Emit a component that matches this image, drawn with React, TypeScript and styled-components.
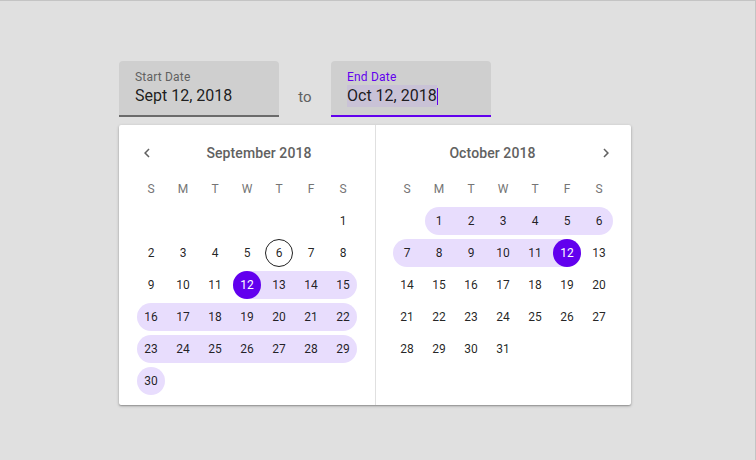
import React from "react";
import styled, { createGlobalStyle } from "styled-components";

const GlobalStyle = createGlobalStyle`
  html, body {
    margin: 0;
    padding: 0;
    background: #e0e0e0;
  }
  * {
    box-sizing: border-box;
  }
`;

const Page = styled.div`
  width: 756px;
  height: 460px;
  background: #e0e0e0;
  border-top: 1px solid #c4c4c4;
  border-right: 1px solid #c4c4c4;
  padding: 60px 0 0 119px;
  font-family: Roboto, "Noto Sans", sans-serif;
`;

const Picker = styled.div`
  width: 512px;
  display: flex;
  flex-direction: column;
  gap: 8px;
`;

const FieldRow = styled.div`
  display: flex;
  align-items: flex-start;
`;

const Field = styled.div<{ $active?: boolean }>`
  width: 160px;
  height: 56px;
  padding: 8px 16px 0;
  background: #cfcfcf;
  border-radius: 4px 4px 0 0;
  border-bottom: 2px solid ${({ $active }) => ($active ? "#6200ee" : "#6b6b6b")};
  display: flex;
  flex-direction: column;
`;

const FieldLabel = styled.div<{ $active?: boolean }>`
  font-size: 12px;
  line-height: 16px;
  letter-spacing: 0.2px;
  color: ${({ $active }) => ($active ? "#6200ee" : "#616161")};
`;

const FieldValue = styled.div`
  font-size: 16px;
  line-height: 22px;
  color: rgba(0, 0, 0, 0.87);
  display: flex;
  align-items: center;
`;

const Selected = styled.span`
  background: #c9c2d6;
`;

const Caret = styled.span`
  width: 1px;
  height: 17px;
  background: #6200ee;
`;

const Separator = styled.div`
  width: 52px;
  padding-top: 25px;
  text-align: center;
  font-size: 15px;
  line-height: 22px;
  color: #616161;
`;

const Card = styled.div`
  width: 512px;
  height: 280px;
  background: #fff;
  border-radius: 2px;
  box-shadow: 0 1px 3px rgba(0, 0, 0, 0.3), 0 1px 1px rgba(0, 0, 0, 0.14);
  display: flex;
`;

const Month = styled.div<{ $divided?: boolean }>`
  width: 256px;
  padding: 7px 16px 0;
  box-shadow: ${({ $divided }) => ($divided ? "inset 1px 0 0 #e0e0e0" : "none")};
`;

const MonthHeader = styled.div`
  height: 41px;
  display: flex;
  align-items: center;
`;

const NavButton = styled.div<{ $side: "left" | "right" }>`
  width: 24px;
  height: 24px;
  margin-right: ${({ $side }) => ($side === "right" ? "-3px" : "0")};
  display: flex;
  align-items: center;
  justify-content: center;
  color: #616161;
`;

const MonthTitle = styled.div`
  flex: 1;
  text-align: center;
  font-size: 14px;
  font-weight: 500;
  letter-spacing: 0.1px;
  color: #616161;
`;

const Grid = styled.div`
  display: grid;
  grid-template-columns: repeat(7, 32px);
  grid-auto-rows: 32px;
`;

const Weekday = styled.div`
  display: flex;
  align-items: center;
  justify-content: center;
  font-size: 12px;
  color: #757575;
`;

const Cell = styled.div<{ $range: boolean; $roundL: boolean; $roundR: boolean }>`
  position: relative;
  display: flex;
  align-items: center;
  justify-content: center;

  &::before {
    content: "";
    display: ${({ $range }) => ($range ? "block" : "none")};
    position: absolute;
    top: 2px;
    bottom: 2px;
    left: ${({ $roundL }) => ($roundL ? "2px" : "0")};
    right: ${({ $roundR }) => ($roundR ? "2px" : "0")};
    background: #e8ddfd;
    border-radius: ${({ $roundL, $roundR }) =>
      `${$roundL ? 14 : 0}px ${$roundR ? 14 : 0}px ${$roundR ? 14 : 0}px ${$roundL ? 14 : 0}px`};
  }
`;

const DayCircle = styled.div<{ $selected: boolean; $today: boolean }>`
  position: relative;
  width: 28px;
  height: 28px;
  border-radius: 50%;
  display: flex;
  align-items: center;
  justify-content: center;
  font-size: 12px;
  color: ${({ $selected }) => ($selected ? "#fff" : "rgba(0, 0, 0, 0.87)")};
  background: ${({ $selected }) => ($selected ? "#6200ee" : "transparent")};
  border: ${({ $today }) => ($today ? "1px solid rgba(0, 0, 0, 0.87)" : "none")};
`;

const Chevron = ({ dir }: { dir: "left" | "right" }) => (
  <svg width="18" height="18" viewBox="0 0 24 24" fill="currentColor">
    {dir === "left" ? (
      <path d="M15.41 7.41L14 6l-6 6 6 6 1.41-1.41L10.83 12z" />
    ) : (
      <path d="M8.59 16.59L10 18l6-6-6-6-1.41 1.41L13.17 12z" />
    )}
  </svg>
);

type MonthSpec = {
  title: string;
  offset: number;
  days: number;
  rangeFrom: number;
  rangeTo: number;
  selected: number;
  today?: number;
  nav: "left" | "right";
};

const months: MonthSpec[] = [
  { title: "September 2018", offset: 6, days: 30, rangeFrom: 12, rangeTo: 30, selected: 12, today: 6, nav: "left" },
  { title: "October 2018", offset: 1, days: 31, rangeFrom: 1, rangeTo: 12, selected: 12, nav: "right" },
];

const weekdays = ["S", "M", "T", "W", "T", "F", "S"];

function MonthView({ spec, divided }: { spec: MonthSpec; divided?: boolean }) {
  const blanks = Array.from({ length: spec.offset });
  const days = Array.from({ length: spec.days }, (_, i) => i + 1);

  return (
    <Month $divided={divided}>
      <MonthHeader>
        {spec.nav === "left" && (
          <NavButton $side="left">
            <Chevron dir="left" />
          </NavButton>
        )}
        <MonthTitle>{spec.title}</MonthTitle>
        {spec.nav === "right" && (
          <NavButton $side="right">
            <Chevron dir="right" />
          </NavButton>
        )}
      </MonthHeader>
      <Grid>
        {weekdays.map((w, i) => (
          <Weekday key={`w${i}`}>{w}</Weekday>
        ))}
        {blanks.map((_, i) => (
          <div key={`b${i}`} />
        ))}
        {days.map((d) => {
          const col = (spec.offset + d - 1) % 7;
          const inRange = d >= spec.rangeFrom && d <= spec.rangeTo;
          const roundL = d === spec.rangeFrom || col === 0;
          const roundR = d === spec.rangeTo || col === 6;
          return (
            <Cell key={d} $range={inRange} $roundL={roundL} $roundR={roundR}>
              <DayCircle $selected={d === spec.selected} $today={d === spec.today}>
                {d}
              </DayCircle>
            </Cell>
          );
        })}
      </Grid>
    </Month>
  );
}

export default function App() {
  return (
    <>
      <GlobalStyle />
      <Page>
        <Picker>
          <FieldRow>
            <Field>
              <FieldLabel>Start Date</FieldLabel>
              <FieldValue>Sept 12, 2018</FieldValue>
            </Field>
            <Separator>to</Separator>
            <Field $active>
              <FieldLabel $active>End Date</FieldLabel>
              <FieldValue>
                <Selected>Oct 12, 2018</Selected>
                <Caret />
              </FieldValue>
            </Field>
          </FieldRow>
          <Card>
            <MonthView spec={months[0]} />
            <MonthView spec={months[1]} divided />
          </Card>
        </Picker>
      </Page>
    </>
  );
}
